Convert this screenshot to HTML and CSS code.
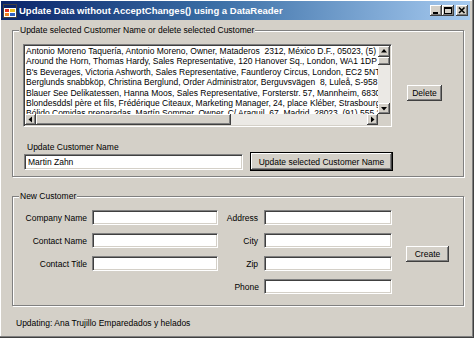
FILE: index.html
```html
<!DOCTYPE html>
<html>
<head>
<meta charset="utf-8">
<title>Update Data without AcceptChanges() using a DataReader</title>
<link rel="stylesheet" href="styles.css">
</head>
<body>
<div class="window">
  <div class="titlebar">
    <svg class="appicon" width="14" height="14" viewBox="0 0 14 14">
      <rect x="0.5" y="0.5" width="13" height="13" fill="#ffffff" stroke="#404040"/>
      <rect x="1" y="1" width="12" height="3" fill="#0a246a"/>
      <rect x="2" y="5" width="4" height="3" fill="#e03020"/>
      <rect x="7" y="5" width="5" height="3" fill="#f0c020"/>
      <rect x="2" y="9" width="4" height="3" fill="#f08020"/>
      <rect x="7" y="9" width="5" height="3" fill="#3060c0"/>
    </svg>
    <span class="title">Update Data without AcceptChanges() using a DataReader</span>
    <div class="caption-buttons">
      <span class="cbtn"><svg width="12" height="11" viewBox="0 0 12 11"><rect x="3" y="7" width="5" height="2" fill="#000"/></svg></span>
      <span class="cbtn"><svg width="12" height="11" viewBox="0 0 12 11"><rect x="2.5" y="2.5" width="7" height="6" fill="none" stroke="#000"/><rect x="2" y="2" width="8" height="2" fill="#000"/></svg></span>
      <span class="cbtn close"><svg width="12" height="11" viewBox="0 0 12 11"><path d="M3 2.5 L8.5 8 M8.5 2.5 L3 8" stroke="#000" stroke-width="1.6" fill="none"/></svg></span>
    </div>
  </div>

  <div class="client">
    <fieldset class="group group-update">
      <legend>Update selected Customer Name or delete selected Customer</legend>
      <div class="group-body">
        <div class="list-row">
          <div class="listbox">
            <div class="list-items">
              <div class="item">Antonio Moreno Taquería, Antonio Moreno, Owner, Mataderos&nbsp; 2312, México D.F., 05023, (5) 555-3932</div>
              <div class="item">Around the Horn, Thomas Hardy, Sales Representative, 120 Hanover Sq., London, WA1 1DP</div>
              <div class="item">B's Beverages, Victoria Ashworth, Sales Representative, Fauntleroy Circus, London, EC2 5NT</div>
              <div class="item">Berglunds snabbköp, Christina Berglund, Order Administrator, Berguvsvägen&nbsp; 8, Luleå, S-958 22</div>
              <div class="item">Blauer See Delikatessen, Hanna Moos, Sales Representative, Forsterstr. 57, Mannheim, 68306</div>
              <div class="item">Blondesddsl père et fils, Frédérique Citeaux, Marketing Manager, 24, place Kléber, Strasbourg</div>
              <div class="item">Bólido Comidas preparadas, Martín Sommer, Owner, C/ Araquil, 67, Madrid, 28023, (91) 555 22 82</div>
            </div>
            <div class="vscroll">
              <span class="sbtn"><svg width="12" height="11" viewBox="0 0 12 11"><path d="M6 3 L9 6.5 L3 6.5 Z" fill="#000"/></svg></span>
              <span class="vthumb"></span>
              <span class="track"></span>
              <span class="sbtn"><svg width="12" height="11" viewBox="0 0 12 11"><path d="M6 7.5 L9 4 L3 4 Z" fill="#000"/></svg></span>
            </div>
            <div class="hscroll">
              <span class="sbtn"><svg width="11" height="11" viewBox="0 0 11 11"><path d="M3.5 5.5 L7 2.5 L7 8.5 Z" fill="#000"/></svg></span>
              <span class="hthumb"></span>
              <span class="track"></span>
              <span class="sbtn"><svg width="11" height="11" viewBox="0 0 11 11"><path d="M7.5 5.5 L4 2.5 L4 8.5 Z" fill="#000"/></svg></span>
            </div>
            <div class="corner"></div>
          </div>
          <button class="btn btn-delete">Delete</button>
        </div>
        <div class="field-label">Update Customer Name</div>
        <div class="name-row">
          <div class="textbox name-box">Martin Zahn</div>
          <button class="btn btn-default btn-update">Update selected Customer Name</button>
        </div>
      </div>
    </fieldset>

    <fieldset class="group group-new">
      <legend>New Customer</legend>
      <div class="form-grid">
        <span class="lbl">Company Name</span><div class="textbox tb-left"></div>
        <span class="lbl">Address</span><div class="textbox tb-right"></div>
        <button class="btn btn-create">Create</button>

        <span class="lbl">Contact Name</span><div class="textbox tb-left"></div>
        <span class="lbl">City</span><div class="textbox tb-right"></div>

        <span class="lbl">Contact Title</span><div class="textbox tb-left"></div>
        <span class="lbl">Zip</span><div class="textbox tb-right"></div>

        <span class="lbl"></span><span></span>
        <span class="lbl">Phone</span><div class="textbox tb-right"></div>
      </div>
    </fieldset>

    <div class="status">Updating: Ana Trujillo Emparedados y helados</div>
  </div>
</div>
</body>
</html>
```

FILE: styles.css
```css
html, body {
  margin: 0;
  padding: 0;
  background: #d4d0c8;
}

.window {
  width: 474px;
  height: 338px;
  box-sizing: border-box;
  padding: 1px 4px 5px 1px;
  background: #d4d0c8;
  box-shadow: inset -1px -1px 0 #404040, inset -2px -2px 0 #808080, inset 1px 1px 0 #ffffff;
  display: flex;
  flex-direction: column;
  overflow: hidden;
  font-family: "Liberation Sans", Arial, sans-serif;
  font-size: 8.5px;
  color: #000;
}

/* ---------- title bar ---------- */
.titlebar {
  height: 19px;
  flex: none;
  display: flex;
  align-items: center;
  padding-left: 2px;
  background: linear-gradient(to right, #0a246a 0%, #3a6ea5 45%, #a6caf0 100%);
}

.appicon {
  flex: none;
  margin-right: 2px;
}

.title {
  flex: 1;
  color: #fff;
  font-weight: bold;
  font-size: 9.5px;
  white-space: nowrap;
  overflow: hidden;
}

.caption-buttons {
  display: flex;
  margin-right: 2px;
}

.cbtn {
  width: 12px;
  height: 11px;
  display: block;
  background: #d4d0c8;
  box-shadow: inset -1px -1px 0 #404040, inset 1px 1px 0 #fff, inset -2px -2px 0 #808080;
}

.cbtn svg {
  display: block;
}

.cbtn.close {
  margin-left: 2px;
}

/* ---------- client ---------- */
.client {
  flex: 1;
  padding-left: 11px;
  display: flex;
  flex-direction: column;
}

.group {
  width: 452px;
  box-sizing: border-box;
  margin: 0;
  min-width: 0;
  border: 1px solid #808080;
  box-shadow: inset 1px 1px 0 #fff, 1px 1px 0 #fff;
  padding: 9px 0 5px 6px;
}

.group legend {
  padding: 0 1px;
  margin: 0;
  line-height: 10px;
  font-size: 8.5px;
  background: #d4d0c8;
}

.group-update {
  margin-top: 5px;
}

.group-new {
  margin-top: 14px;
  padding-bottom: 11px;
}

.group-body {
  padding-left: 4px;
}

.list-row {
  display: flex;
  align-items: flex-start;
}

/* ---------- list box ---------- */
.listbox {
  width: 369px;
  height: 83px;
  box-sizing: border-box;
  flex: none;
  border: 1px solid;
  border-color: #808080 #fff #fff #808080;
  box-shadow: inset 1px 1px 0 #404040, inset -1px -1px 0 #d4d0c8;
  padding: 1px;
  background: #fff;
  display: grid;
  grid-template-columns: 1fr 12px;
  grid-template-rows: 1fr 11px;
}

.list-items {
  overflow: hidden;
  white-space: nowrap;
  padding: 0 0 0 1px;
  line-height: 10.4px;
}

.item {
  height: 10.4px;
}

.vscroll {
  display: flex;
  flex-direction: column;
  background: #ebe9e5;
}

.hscroll {
  display: flex;
  background: #ebe9e5;
}

.sbtn {
  flex: none;
  display: block;
  background: #d4d0c8;
  box-shadow: inset -1px -1px 0 #404040, inset 1px 1px 0 #fff, inset -2px -2px 0 #808080;
}

.vscroll .sbtn {
  width: 12px;
  height: 11px;
}

.hscroll .sbtn {
  width: 11px;
  height: 11px;
}

.sbtn svg {
  display: block;
}

.vthumb {
  flex: none;
  height: 8px;
  background: #d4d0c8;
  box-shadow: inset -1px -1px 0 #404040, inset 1px 1px 0 #fff, inset -2px -2px 0 #808080;
}

.hthumb {
  flex: none;
  width: 195px;
  background: #d4d0c8;
  box-shadow: inset -1px -1px 0 #404040, inset 1px 1px 0 #fff, inset -2px -2px 0 #808080;
}

.track {
  flex: 1;
}

.corner {
  background: #d4d0c8;
}

/* ---------- buttons ---------- */
.btn {
  font: inherit;
  color: #000;
  background: #d4d0c8;
  border: none;
  padding: 0;
  margin: 0;
  box-shadow: inset -1px -1px 0 #404040, inset 1px 1px 0 #fff, inset -2px -2px 0 #808080;
  display: flex;
  align-items: center;
  justify-content: center;
  box-sizing: border-box;
}

.btn-default {
  border: 1px solid #000;
}

.btn-delete {
  width: 35px;
  height: 16px;
  margin: 41px 0 0 15px;
}

.btn-update {
  width: 143px;
  height: 19px;
  margin-left: 7px;
}

.btn-create {
  width: 43px;
  height: 16px;
  grid-column: 5;
  grid-row: 1 / span 4;
  align-self: center;
  margin: 4px 0 0 14px;
}

/* ---------- fields ---------- */
.field-label {
  margin-top: 15px;
  padding-left: 4px;
  line-height: 10px;
}

.name-row {
  display: flex;
  align-items: center;
}

.textbox {
  box-sizing: border-box;
  background: #fff;
  border: 1px solid;
  border-color: #808080 #fff #fff #808080;
  box-shadow: inset 1px 1px 0 #404040, inset -1px -1px 0 #d4d0c8;
  padding: 0 3px;
  height: 15px;
  line-height: 13px;
  white-space: nowrap;
}

.name-box {
  width: 219px;
  height: 16px;
  line-height: 14px;
  margin-left: 1px;
}

.form-grid {
  display: grid;
  grid-template-columns: 73px 126px 46px 128px auto;
  grid-template-rows: repeat(4, 15px);
  row-gap: 8px;
  align-items: center;
}

.lbl {
  text-align: right;
  padding-right: 5px;
  white-space: nowrap;
}

.tb-right {
  width: 128px;
}

.tb-left {
  width: 126px;
}

.form-grid .lbl:nth-of-type(even) {
  padding-right: 6px;
}

/* ---------- status ---------- */
.status {
  margin-top: 12px;
  padding-left: 4px;
  line-height: 10px;
}
```
